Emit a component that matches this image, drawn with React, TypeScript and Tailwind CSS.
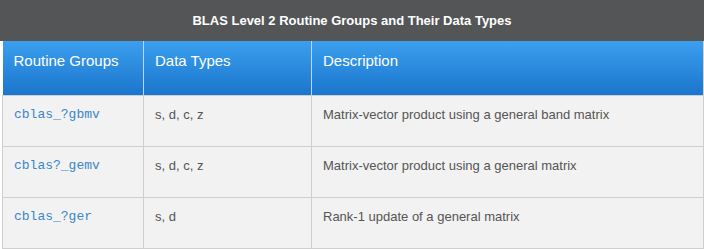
import React from 'react';

const rows = [
  { fn: 'cblas_?gbmv', types: 's, d, c, z', desc: 'Matrix-vector product using a general band matrix' },
  { fn: 'cblas?_gemv', types: 's, d, c, z', desc: 'Matrix-vector product using a general matrix' },
  { fn: 'cblas_?ger', types: 's, d', desc: 'Rank-1 update of a general matrix' },
];

export default function App() {
  return (
    <div className="w-[704px] h-[249px] bg-white [font-family:Liberation_Sans,Arial,sans-serif]">
      <div className="h-[41px] bg-[#545557] flex items-center justify-center text-white text-[13px] font-bold">
        BLAS Level 2 Routine Groups and Their Data Types
      </div>
      <table className="ml-[2px] w-[702px] border-collapse table-fixed">
        <colgroup>
          <col className="w-[141px]" />
          <col className="w-[168px]" />
          <col />
        </colgroup>
        <thead>
          <tr className="h-[54px] bg-gradient-to-b from-[#3b9fee] to-[#1a76cc] text-white text-[15px] text-left">
            <th className="font-normal align-top pt-[9px] px-[11px] border-r border-[#b9d8f2]">Routine Groups</th>
            <th className="font-normal align-top pt-[9px] px-[11px] border-r border-[#b9d8f2]">Data Types</th>
            <th className="font-normal align-top pt-[9px] px-[11px] border-r border-[#d0d0d0]">Description</th>
          </tr>
        </thead>
        <tbody className="bg-[#f2f2f2] text-[13px] text-[#555555]">
          {rows.map((r) => (
            <tr key={r.fn} className="h-[51px]">
              <td className="align-top pt-[10px] px-[11px] border border-[#cfcfcf] [font-family:Liberation_Mono,monospace] text-[13px] leading-[18px] text-[#3b86c8]">
                {r.fn}
              </td>
              <td className="align-top pt-[9px] px-[11px] border border-[#cfcfcf]">{r.types}</td>
              <td className="align-top pt-[9px] px-[11px] border border-[#cfcfcf]">{r.desc}</td>
            </tr>
          ))}
        </tbody>
      </table>
    </div>
  );
}
